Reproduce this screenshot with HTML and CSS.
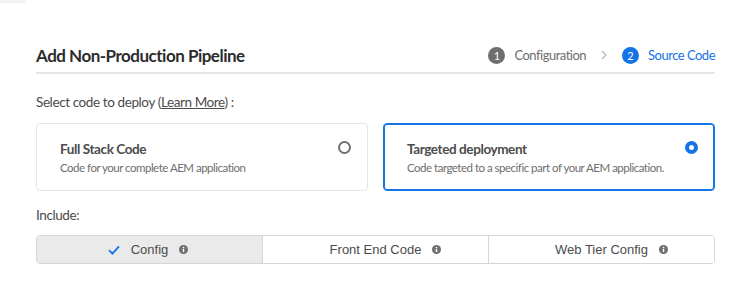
FILE: index.html
```html
<!DOCTYPE html>
<html lang="en">
<head>
    <meta charset="UTF-8">
    <title>Add Non-Production Pipeline</title>
    <link rel="stylesheet" href="styles.css">
</head>
<body>
    <div class="top-strip"></div>
    <div class="page">
        <header class="dialog-header">
            <h1>Add Non-Production Pipeline</h1>
            <ol class="steps">
                <li class="step done"><span class="step-num">1</span>Configuration</li>
                <li class="step-sep">
                    <svg width="6" height="10" viewBox="0 0 6 10"><path d="M1 1 L5 5 L1 9" fill="none" stroke="#b9b9b9" stroke-width="1.3"/></svg>
                </li>
                <li class="step active"><span class="step-num">2</span>Source Code</li>
            </ol>
        </header>

        <p class="field-label">Select code to deploy (<a href="#">Learn More</a>) :</p>
        <div class="cards">
            <div class="card">
                <div class="card-text">
                    <h2>Full Stack Code</h2>
                    <p>Code for your complete AEM application</p>
                </div>
                <span class="radio"></span>
            </div>
            <div class="card selected">
                <div class="card-text">
                    <h2>Targeted deployment</h2>
                    <p>Code targeted to a specific part of your AEM application.</p>
                </div>
                <span class="radio"></span>
            </div>
        </div>

        <p class="field-label include">Include:</p>
        <div class="segments">
            <div class="segment checked">
                <span class="seg-left">
                    <svg class="check" width="12" height="10" viewBox="0 0 12 10"><path d="M1 5.2 L4.4 8.6 L11 1.4" fill="none" stroke="#1473e6" stroke-width="1.8"/></svg>
                </span>
                <span>Config</span>
                <span class="seg-right">
                    <svg class="info" width="9" height="9" viewBox="0 0 10 10"><circle cx="5" cy="5" r="5" fill="#707070"/><rect x="4.2" y="4.2" width="1.6" height="3.6" fill="#fff"/><circle cx="5" cy="2.8" r="0.9" fill="#fff"/></svg>
                </span>
            </div>
            <div class="segment">
                <span class="seg-left"></span>
                <span>Front End Code</span>
                <span class="seg-right">
                    <svg class="info" width="9" height="9" viewBox="0 0 10 10"><circle cx="5" cy="5" r="5" fill="#707070"/><rect x="4.2" y="4.2" width="1.6" height="3.6" fill="#fff"/><circle cx="5" cy="2.8" r="0.9" fill="#fff"/></svg>
                </span>
            </div>
            <div class="segment">
                <span class="seg-left"></span>
                <span>Web Tier Config</span>
                <span class="seg-right">
                    <svg class="info" width="9" height="9" viewBox="0 0 10 10"><circle cx="5" cy="5" r="5" fill="#707070"/><rect x="4.2" y="4.2" width="1.6" height="3.6" fill="#fff"/><circle cx="5" cy="2.8" r="0.9" fill="#fff"/></svg>
                </span>
            </div>
        </div>
    </div>
</body>
</html>
```

FILE: styles.css
```css
body {
    font-family: 'Lato', 'Open Sans', Arial, sans-serif;
    margin: 0;
    padding: 0;
    background: #fff;
    color: #4b4b4b;
}
.top-strip {
    width: 26px;
    height: 3px;
    background: #f2f2f2;
}
.page {
    padding: 40px 35px 0 36px;
}
.dialog-header {
    display: flex;
    justify-content: space-between;
    align-items: center;
    height: 24px;
    padding-bottom: 5px;
    border-bottom: 2px solid #e6e6e6;
}
.dialog-header h1 {
    margin: 0;
    font-size: 17px;
    letter-spacing: -0.5px;
    font-weight: 700;
    color: #2c2c2c;
}
.steps {
    display: flex;
    align-items: center;
    list-style: none;
    margin: 0;
    padding: 0;
    font-size: 13px;
    letter-spacing: -0.5px;
}
.step {
    display: flex;
    align-items: center;
    color: #6e6e6e;
}
.step-num {
    width: 17px;
    height: 17px;
    border-radius: 50%;
    background: #6e6e6e;
    color: #fff;
    font-size: 11px;
    letter-spacing: 0;
    display: flex;
    justify-content: center;
    align-items: center;
    margin-right: 9px;
}
.step.active {
    color: #1473e6;
}
.step.active .step-num {
    background: #1473e6;
}
.step-sep {
    display: flex;
    margin: 0 15px;
}
.field-label {
    margin: 18px 0 11px 0;
    font-size: 13.5px;
    letter-spacing: -0.4px;
    line-height: 20px;
}
.field-label a {
    color: #4b4b4b;
}
.field-label.include {
    margin: 14px 0 10px 0;
}
.cards {
    display: flex;
    gap: 15px;
}
.card {
    flex: 1;
    display: flex;
    justify-content: space-between;
    align-items: flex-start;
    border: 1px solid #e6e6e6;
    border-radius: 4px;
    padding: 15px 16px 13px 23px;
}
.card.selected {
    border-color: #1473e6;
    box-shadow: inset 0 0 0 1px #1473e6;
}
.card h2 {
    margin: 0;
    font-size: 13.5px;
    letter-spacing: -0.4px;
    line-height: 20px;
    font-weight: 700;
    color: #4b4b4b;
}
.card p {
    margin: 0;
    font-size: 11.5px;
    letter-spacing: -0.5px;
    line-height: 18px;
    color: #6e6e6e;
}
.radio {
    width: 13px;
    height: 13px;
    box-sizing: border-box;
    border: 2px solid #707070;
    border-radius: 50%;
    margin-top: 2px;
}
.card.selected .radio {
    border: 4px solid #1473e6;
    background: #fff;
}
.segments {
    display: flex;
    height: 29px;
    box-sizing: border-box;
    border: 1px solid #d6d6d6;
    border-radius: 4px;
    overflow: hidden;
}
.segment {
    flex: 1;
    display: grid;
    grid-template-columns: 1fr auto 1fr;
    align-items: center;
    column-gap: 11px;
    font-family: 'Liberation Sans', Arial, sans-serif;
    font-size: 13px;
    color: #4b4b4b;
    background: #fff;
}
.seg-left {
    justify-self: end;
    display: flex;
}
.seg-right {
    justify-self: start;
    display: flex;
}
.segment + .segment {
    border-left: 1px solid #d6d6d6;
}
.segment.checked {
    background: #eaeaea;
}
```
